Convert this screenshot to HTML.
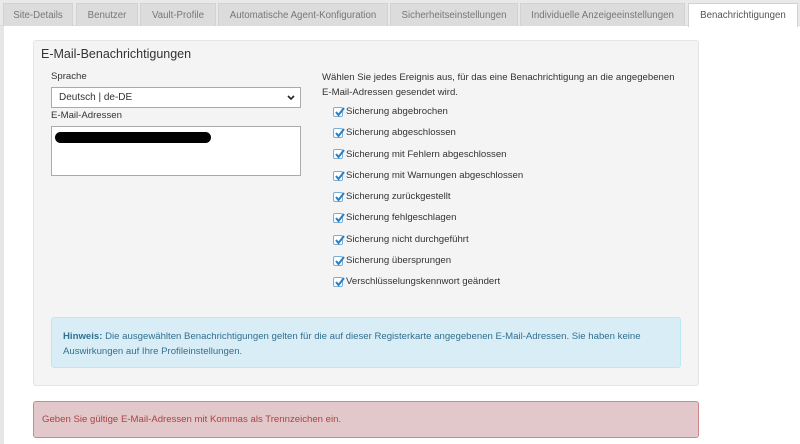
<!DOCTYPE html>
<html><head><meta charset="utf-8"><style>
*{box-sizing:border-box;margin:0;padding:0}
body{width:800px;height:444px;overflow:hidden;background:#fff;font-family:"Liberation Sans",sans-serif;font-size:9.6px;color:#333;position:relative}
.bar{position:absolute;left:0;top:0;width:800px;height:26px;background:#e9e9e9;border-bottom:1px solid #ddd}
.tab{position:absolute;top:3px;height:23px;background:#dcdcdc;color:#777;font-size:9.7px;text-align:center;line-height:24px;border:1px solid #d2d2d2;border-bottom:none}
.tab.act{background:#fff;color:#555;height:24px}
.left{position:absolute;left:0;top:26px;width:4px;height:418px;background:#e6e6e6}
.panel{position:absolute;left:33px;top:40px;width:666px;height:346px;background:#f4f4f4;border:1px solid #e4e4e4;border-radius:3px}
.abs{position:absolute;white-space:nowrap}
.sel{position:absolute;left:51px;top:87px;width:250px;height:21px;background:#fff;border:1px solid #aaa;font-size:10px;line-height:19px;padding-left:7px}
.ta{position:absolute;left:51px;top:126px;width:250px;height:50px;background:#fff;border:1px solid #aaa}
.cb{position:absolute;left:333px;width:10px;height:10px;border:1px solid #7aaed8;border-radius:2px;background:#fff}
.cb svg{position:absolute;left:0;top:-2px}
.lab{position:absolute;left:346px;white-space:nowrap}
.info{position:absolute;left:51px;top:317px;width:630px;height:51px;background:#d9edf7;border:1px solid #bce8f1;border-radius:3px;color:#31708f;line-height:15px;padding:11px 11px}
.err{position:absolute;left:33px;top:401px;width:666px;height:37px;background:#e2c8cb;border:1px solid #cf858b;border-radius:3px;color:#a94442;line-height:35px;padding-left:8px}
</style></head><body>
<div class="bar"></div>
<div class="tab" style="left:3px;width:70px">Site-Details</div>
<div class="tab" style="left:76px;width:62px">Benutzer</div>
<div class="tab" style="left:140px;width:76px">Vault-Profile</div>
<div class="tab" style="left:218px;width:170px">Automatische Agent-Konfiguration</div>
<div class="tab" style="left:390px;width:128px">Sicherheitseinstellungen</div>
<div class="tab" style="left:520px;width:165px">Individuelle Anzeigeeinstellungen</div>
<div class="tab act" style="left:688px;width:110px">Benachrichtigungen</div>
<div class="left"></div>
<div class="panel"></div>
<div class="abs" style="left:41px;top:47px;font-size:12.5px;color:#333">E-Mail-Benachrichtigungen</div>
<div class="abs" style="left:51px;top:71px">Sprache</div>
<div class="sel">Deutsch | de-DE<svg style="position:absolute;right:5px;top:7px" width="8" height="6"><path d="M1 1l3 3 3-3" stroke="#222" stroke-width="1.6" fill="none"/></svg></div>
<div class="abs" style="left:51px;top:110px">E-Mail-Adressen</div>
<div class="ta"><div style="position:absolute;left:3px;top:5px;width:156px;height:11px;background:#000;border-radius:6px"></div></div>
<div class="abs" style="left:322px;top:70px;line-height:15px">Wählen Sie jedes Ereignis aus, für das eine Benachrichtigung an die angegebenen<br>E-Mail-Adressen gesendet wird.</div>
<div class="cb" style="top:107px"><svg width="12" height="12"><path d="M2 6l2.5 3L10 2" stroke="#2a7fc4" stroke-width="2" fill="none"/></svg></div><div class="lab" style="top:106px">Sicherung abgebrochen</div>
<div class="cb" style="top:128px"><svg width="12" height="12"><path d="M2 6l2.5 3L10 2" stroke="#2a7fc4" stroke-width="2" fill="none"/></svg></div><div class="lab" style="top:127px">Sicherung abgeschlossen</div>
<div class="cb" style="top:149px"><svg width="12" height="12"><path d="M2 6l2.5 3L10 2" stroke="#2a7fc4" stroke-width="2" fill="none"/></svg></div><div class="lab" style="top:149px">Sicherung mit Fehlern abgeschlossen</div>
<div class="cb" style="top:171px"><svg width="12" height="12"><path d="M2 6l2.5 3L10 2" stroke="#2a7fc4" stroke-width="2" fill="none"/></svg></div><div class="lab" style="top:170px">Sicherung mit Warnungen abgeschlossen</div>
<div class="cb" style="top:192px"><svg width="12" height="12"><path d="M2 6l2.5 3L10 2" stroke="#2a7fc4" stroke-width="2" fill="none"/></svg></div><div class="lab" style="top:191px">Sicherung zurückgestellt</div>
<div class="cb" style="top:213px"><svg width="12" height="12"><path d="M2 6l2.5 3L10 2" stroke="#2a7fc4" stroke-width="2" fill="none"/></svg></div><div class="lab" style="top:212px">Sicherung fehlgeschlagen</div>
<div class="cb" style="top:235px"><svg width="12" height="12"><path d="M2 6l2.5 3L10 2" stroke="#2a7fc4" stroke-width="2" fill="none"/></svg></div><div class="lab" style="top:234px">Sicherung nicht durchgeführt</div>
<div class="cb" style="top:256px"><svg width="12" height="12"><path d="M2 6l2.5 3L10 2" stroke="#2a7fc4" stroke-width="2" fill="none"/></svg></div><div class="lab" style="top:255px">Sicherung übersprungen</div>
<div class="cb" style="top:277px"><svg width="12" height="12"><path d="M2 6l2.5 3L10 2" stroke="#2a7fc4" stroke-width="2" fill="none"/></svg></div><div class="lab" style="top:276px">Verschlüsselungskennwort geändert</div>
<div class="info"><b>Hinweis:</b> Die ausgewählten Benachrichtigungen gelten für die auf dieser Registerkarte angegebenen E-Mail-Adressen. Sie haben keine Auswirkungen auf Ihre Profileinstellungen.</div>
<div class="err">Geben Sie gültige E-Mail-Adressen mit Kommas als Trennzeichen ein.</div>
</body></html>
